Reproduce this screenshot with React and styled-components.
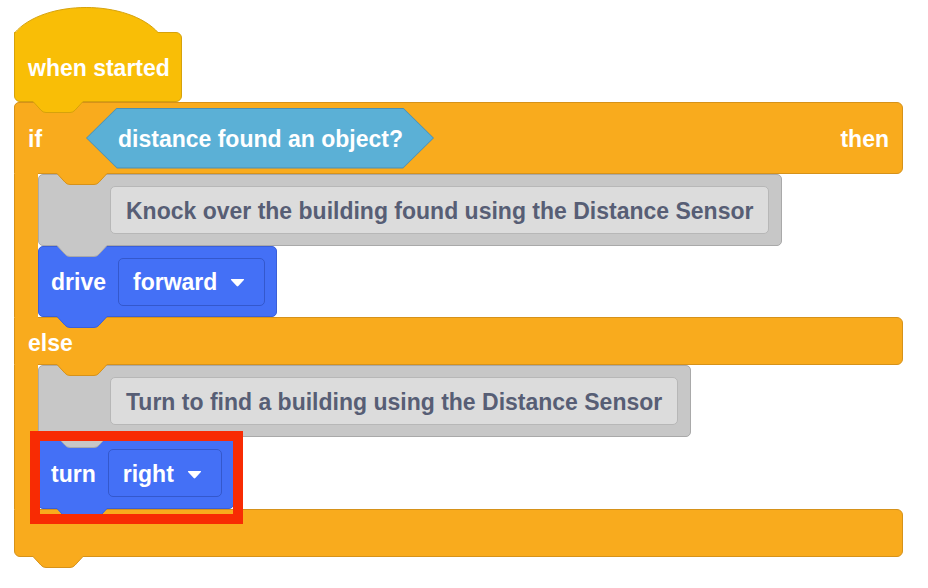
import React from 'react';
import styled, { createGlobalStyle } from 'styled-components';

const colors = {
  hat: '#F9BE06',
  hatEdge: '#D6A20B',
  control: '#F9AB1D',
  controlEdge: '#D6921A',
  motion: '#4470F6',
  motionEdge: '#3A5FD9',
  menuEdge: '#3458CC',
  sensor: '#5BB0D6',
  sensorEdge: '#4A8FB5',
  comment: '#C7C7C7',
  commentEdge: '#A9A9A9',
  note: '#DCDCDC',
  noteEdge: '#B7B7B7',
  noteText: '#575E75',
  highlight: '#F82B03',
};

const GlobalStyle = createGlobalStyle`
  html, body {
    margin: 0;
    background: #ffffff;
  }
  body {
    font-family: "Liberation Sans", Arial, sans-serif;
    font-weight: 700;
    font-size: 23px;
  }
`;

const Canvas = styled.div`
  display: flex;
  flex-direction: column;
  align-items: flex-start;
  padding: 6px 0 24px 14px;
  width: 889px;
`;

/* ---------- little tab that sticks out under every stack block ---------- */

const TabSvg = styled.svg`
  position: absolute;
  left: ${(p) => p.$left}px;
  bottom: -12px;
  z-index: 2;
  overflow: visible;
`;

function Tab({ left = 18, fill, edge }) {
  return (
    <TabSvg $left={left} width="50" height="13" viewBox="0 0 50 13">
      <path
        d="M0,0 H50 V1.5 L42,10.2 Q40,12.5 37,12.5 H13 Q10,12.5 8,10.2 L0,1.5 Z"
        fill={fill}
      />
      <path
        d="M0,1.5 L8,10.2 Q10,12.5 13,12.5 H37 Q40,12.5 42,10.2 L50,1.5"
        fill="none"
        stroke={edge}
        strokeWidth="1"
      />
    </TabSvg>
  );
}

/* ---------- hat block ---------- */

const Hat = styled.div`
  position: relative;
  padding-top: 26px;
`;

const CapSvg = styled.svg`
  position: absolute;
  top: 0;
  left: 0;
  z-index: 1;
`;

const HatBody = styled.div`
  position: relative;
  box-sizing: border-box;
  width: 168px;
  height: 70px;
  padding: 3px 13px 0;
  display: flex;
  align-items: center;
  background: ${colors.hat};
  border: 1px solid ${colors.hatEdge};
  border-radius: 0 6px 6px 6px;
  color: #fff;
  white-space: nowrap;
`;

/* ---------- if / else block ---------- */

const IfBlock = styled.div`
  display: flex;
  flex-direction: column;
  width: 889px;
`;

const Bar = styled.div`
  position: relative;
  box-sizing: border-box;
  height: ${(p) => p.$height}px;
  padding: 2px 13px 0;
  display: flex;
  align-items: center;
  background: ${colors.control};
  border: 1px solid ${colors.controlEdge};
  border-radius: ${(p) => p.$radius};
  color: #fff;

  &::before {
    content: ${(p) => (p.$joinTop ? "''" : 'none')};
    position: absolute;
    top: -1px;
    left: 0;
    width: 23px;
    height: 1px;
    background: ${colors.control};
  }
  &::after {
    content: ${(p) => (p.$joinBottom ? "''" : 'none')};
    position: absolute;
    bottom: -1px;
    left: 0;
    width: 23px;
    height: 1px;
    background: ${colors.control};
  }
`;

const Header = styled(Bar)`
  padding-top: 0;
  display: grid;
  grid-template-columns: 58px auto 1fr auto;
`;

const Keyword = styled.span`
  padding-top: 2px;
  white-space: nowrap;
`;

const RightWord = styled(Keyword)`
  grid-column: 4;
`;

const Mouth = styled.div`
  display: flex;
`;

const Arm = styled.div`
  box-sizing: border-box;
  width: 24px;
  flex: none;
  background: ${colors.control};
  border-left: 1px solid ${colors.controlEdge};
`;

const Inner = styled.div`
  display: flex;
  flex-direction: column;
  align-items: flex-start;
`;

/* ---------- boolean hexagon ---------- */

const hex = (n) =>
  `polygon(${n}px 0, calc(100% - ${n}px) 0, 100% 50%, calc(100% - ${n}px) 100%, ${n}px 100%, 0 50%)`;

const HexFrame = styled.div`
  padding: 1px;
  background: ${colors.sensorEdge};
  clip-path: ${hex(31)};
`;

const HexFill = styled.div`
  box-sizing: border-box;
  height: 59px;
  padding: 2px 30px 0 31px;
  display: flex;
  align-items: center;
  background: ${colors.sensor};
  clip-path: ${hex(30)};
  color: #fff;
  white-space: nowrap;
`;

/* ---------- comment and motion blocks ---------- */

const Stack = styled.div`
  position: relative;
  box-sizing: border-box;
  height: ${(p) => p.$height || 72}px;
  display: flex;
  align-items: center;
  gap: 12px;
  border-radius: 5px;
  color: #fff;
  white-space: nowrap;
`;

const CommentBlock = styled(Stack)`
  padding: 0 12px 0 71px;
  background: ${colors.comment};
  border: 1px solid ${colors.commentEdge};
`;

const Note = styled.div`
  box-sizing: border-box;
  height: 48px;
  padding: 2px 15px 0;
  display: flex;
  align-items: center;
  background: ${colors.note};
  border: 1px solid ${colors.noteEdge};
  border-radius: 5px;
  color: ${colors.noteText};
`;

const MotionBlock = styled(Stack)`
  padding: 0 11px 0 12px;
  background: ${colors.motion};
  border: 1px solid ${colors.motionEdge};
`;

const Label = styled.span`
  padding-top: 2px;
`;

const Menu = styled.div`
  box-sizing: border-box;
  height: 48px;
  padding: 2px 19px 0 14px;
  display: flex;
  align-items: center;
  gap: 13px;
  background: ${colors.motion};
  border: 1px solid ${colors.menuEdge};
  border-radius: 5px;
`;

const Highlight = styled.div`
  position: absolute;
  top: -7px;
  left: -9px;
  right: -10px;
  bottom: -16px;
  border: 10px solid ${colors.highlight};
  z-index: 3;
  pointer-events: none;
`;

function Caret() {
  return (
    <svg width="15" height="9" viewBox="0 0 15 9">
      <path d="M1.5,1 H13.5 Q14.6,1 13.9,1.9 L8.3,8 Q7.5,8.8 6.7,8 L1.1,1.9 Q0.4,1 1.5,1 Z" fill="#fff" />
    </svg>
  );
}

function Dropdown({ value }) {
  return (
    <Menu>
      <span>{value}</span>
      <Caret />
    </Menu>
  );
}

function Comment({ text }) {
  return (
    <CommentBlock>
      <Note>{text}</Note>
      <Tab left={18} fill={colors.comment} edge={colors.commentEdge} />
    </CommentBlock>
  );
}

export default function App() {
  return (
    <>
      <GlobalStyle />
      <Canvas>
        <Hat>
          <CapSvg width="146" height="29" viewBox="0 0 146 29">
            <path d="M1,27 C30,-7 114,-7 144.5,27 V29 H1 Z" fill={colors.hat} />
            <path d="M0.5,27 C30,-7 114,-7 144.5,27" fill="none" stroke={colors.hatEdge} />
          </CapSvg>
          <HatBody>
            when started
            <Tab left={18} fill={colors.hat} edge={colors.hatEdge} />
          </HatBody>
        </Hat>

        <IfBlock>
          <Header $height={72} $radius="5px 6px 6px 0" $joinBottom>
            <Keyword>if</Keyword>
            <HexFrame>
              <HexFill>distance found an object?</HexFill>
            </HexFrame>
            <RightWord>then</RightWord>
            <Tab left={42} fill={colors.control} edge={colors.controlEdge} />
          </Header>

          <Mouth>
            <Arm />
            <Inner>
              <Comment text="Knock over the building found using the Distance Sensor" />
              <MotionBlock $height={71}>
                <Label>drive</Label>
                <Dropdown value="forward" />
                <Tab left={18} fill={colors.motion} edge={colors.motionEdge} />
              </MotionBlock>
            </Inner>
          </Mouth>

          <Bar $height={48} $radius="0 6px 6px 0" $joinTop $joinBottom>
            <Label>else</Label>
            <Tab left={42} fill={colors.control} edge={colors.controlEdge} />
          </Bar>

          <Mouth>
            <Arm />
            <Inner>
              <Comment text="Turn to find a building using the Distance Sensor" />
              <MotionBlock $height={72}>
                <Label>turn</Label>
                <Dropdown value="right" />
                <Tab left={18} fill={colors.motion} edge={colors.motionEdge} />
                <Highlight />
              </MotionBlock>
            </Inner>
          </Mouth>

          <Bar $height={48} $radius="0 6px 6px 6px" $joinTop>
            <Tab left={18} fill={colors.control} edge={colors.controlEdge} />
          </Bar>
        </IfBlock>
      </Canvas>
    </>
  );
}
